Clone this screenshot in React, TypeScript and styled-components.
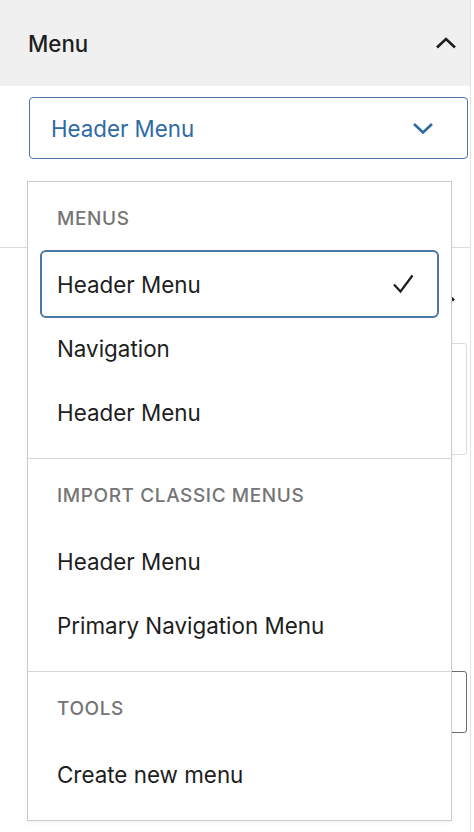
import React from 'react'
import styled, { createGlobalStyle } from 'styled-components'

const GlobalStyle = createGlobalStyle`
  html, body {
    margin: 0;
    padding: 0;
    background: #ffffff;
  }
  body {
    font-family: Inter, "Noto Sans", "Liberation Sans", sans-serif;
    color: #1e1e1e;
  }
  * { box-sizing: border-box; }
`

const Panel = styled.div`
  position: relative;
  width: 471px;
  min-height: 832px;
  border-right: 1px solid #e2e2e2;
  background: #fff;
`

const PanelHeader = styled.div`
  height: 86px;
  padding: 0 13px 0 28px;
  display: flex;
  align-items: center;
  justify-content: space-between;
  background: #f0f0f0;
  font-size: 22.3px;
  font-weight: 500;
  color: #1e1e1e;
`

const Select = styled.div`
  margin: 11px 2px 0 29px;
  height: 62px;
  border: 1.5px solid #4a76a8;
  border-radius: 4px;
  display: flex;
  align-items: center;
  justify-content: space-between;
  padding: 0 33px 0 21px;
  color: #2f6aa6;
  font-size: 22.3px;
`

const Section = styled.div`
  margin-top: 88px;
  border-top: 1px solid #dddddd;
  padding: 0 3px 0 29px;
`

const SectionHead = styled.div`
  height: 95px;
  display: flex;
  align-items: center;
  justify-content: flex-end;
  padding-right: 11px;
`

const Field = styled.div<{ $dark?: boolean; $h: number; $gap: number }>`
  margin-top: ${p => p.$gap}px;
  height: ${p => p.$h}px;
  border: 1px solid ${p => (p.$dark ? '#6b6b6b' : '#dcdcdc')};
  border-radius: 3px;
`

const Popover = styled.div`
  position: absolute;
  top: 181px;
  left: 27px;
  width: 425px;
  background: #fff;
  border: 1px solid #cccccc;
  box-shadow: 0 2px 6px rgba(0, 0, 0, 0.05);
`

const Group = styled.div`
  padding: 14px;
  & + & {
    border-top: 1px solid #d6d6d6;
  }
`

const GroupLabel = styled.div`
  height: 44px;
  margin-bottom: 12px;
  padding-left: 15px;
  display: flex;
  align-items: center;
  font-size: 19px;
  font-weight: 500;
  letter-spacing: 0.6px;
  text-transform: uppercase;
  color: #757575;
`

const Item = styled.div<{ $selected?: boolean }>`
  height: 64px;
  padding: 0 23px 0 15px;
  display: flex;
  align-items: center;
  justify-content: space-between;
  font-size: 22.4px;
  color: #1e1e1e;
  border-radius: 4px;
  outline: ${p => (p.$selected ? '2px solid #4a76a8' : 'none')};
  outline-offset: 0;
`

const Chevron = ({ up, color }: { up?: boolean; color: string }) => (
  <svg width="22" height="12" viewBox="0 0 22 12" fill="none">
    <path
      d={up ? 'M2 10.5L11 2L20 10.5' : 'M2 2L11 10.5L20 2'}
      stroke={color}
      strokeWidth="2.6"
    />
  </svg>
)

const Check = () => (
  <svg width="22" height="20" viewBox="0 0 22 20" fill="none">
    <path d="M2 10.5L8.5 17.5L20.5 1.5" stroke="#1e1e1e" strokeWidth="2.2" />
  </svg>
)

const groups = [
  { label: 'Menus', items: ['Header Menu', 'Navigation', 'Header Menu'] },
  { label: 'Import Classic Menus', items: ['Header Menu', 'Primary Navigation Menu'] },
  { label: 'Tools', items: ['Create new menu'] },
]

export default function App() {
  return (
    <>
      <GlobalStyle />
      <Panel>
        <PanelHeader>
          <span>Menu</span>
          <Chevron up color="#1e1e1e" />
        </PanelHeader>
        <Select>
          <span>Header Menu</span>
          <Chevron color="#2f6aa6" />
        </Select>

        <Section>
          <SectionHead>
            <Chevron up color="#1e1e1e" />
          </SectionHead>
          <Field $h={112} $gap={0} />
          <Field $dark $h={62} $gap={216} />
        </Section>

        <Popover>
          {groups.map((g, gi) => (
            <Group key={g.label}>
              <GroupLabel>{g.label}</GroupLabel>
              {g.items.map((it, i) => {
                const sel = gi === 0 && i === 0
                return (
                  <Item key={i} $selected={sel}>
                    <span>{it}</span>
                    {sel && <Check />}
                  </Item>
                )
              })}
            </Group>
          ))}
        </Popover>
      </Panel>
    </>
  )
}
